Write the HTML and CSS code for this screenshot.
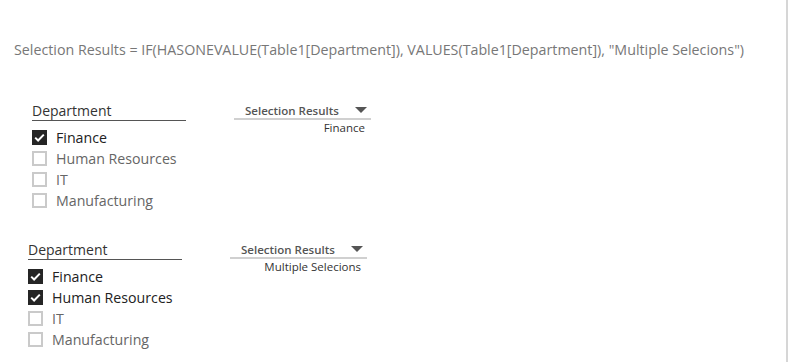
FILE: index.html
```html
<!DOCTYPE html>
<html lang="en">
<head>
    <meta charset="UTF-8">
    <title>Selection Results</title>
    <link rel="stylesheet" href="styles.css">
</head>
<body>
<div class="page">

    <!-- DAX measure -->
    <p class="formula">Selection Results = IF(HASONEVALUE(Table1[Department]), VALUES(Table1[Department]), "Multiple Selecions")</p>

    <!-- One department selected -->
    <div class="demo demo-first">
        <div class="slicer">
            <div class="slicer-title">Department</div>
            <ul class="slicer-list">
                <li class="checked"><span class="box"><svg viewBox="0 0 15 15"><path d="M3.2 7.6 L6.1 10.5 L11.8 4.6" fill="none" stroke="#fff" stroke-width="2"/></svg></span>Finance</li>
                <li><span class="box"></span>Human Resources</li>
                <li><span class="box"></span>IT</li>
                <li><span class="box"></span>Manufacturing</li>
            </ul>
        </div>
        <div class="card">
            <div class="card-head">
                <span>Selection Results</span>
                <span class="arrow"></span>
            </div>
            <div class="card-value">Finance</div>
        </div>
    </div>

    <!-- Two departments selected -->
    <div class="demo demo-second">
        <div class="slicer">
            <div class="slicer-title">Department</div>
            <ul class="slicer-list">
                <li class="checked"><span class="box"><svg viewBox="0 0 15 15"><path d="M3.2 7.6 L6.1 10.5 L11.8 4.6" fill="none" stroke="#fff" stroke-width="2"/></svg></span>Finance</li>
                <li class="checked"><span class="box"><svg viewBox="0 0 15 15"><path d="M3.2 7.6 L6.1 10.5 L11.8 4.6" fill="none" stroke="#fff" stroke-width="2"/></svg></span>Human Resources</li>
                <li><span class="box"></span>IT</li>
                <li><span class="box"></span>Manufacturing</li>
            </ul>
        </div>
        <div class="card">
            <div class="card-head">
                <span>Selection Results</span>
                <span class="arrow"></span>
            </div>
            <div class="card-value">Multiple Selecions</div>
        </div>
    </div>

</div>
</body>
</html>
```

FILE: styles.css
```css
body {
    margin: 0;
    font-family: "Open Sans", "Noto Sans", sans-serif;
    background-color: #fff;
    color: #333;
}
.page {
    box-sizing: border-box;
    width: 788px;
    height: 362px;
    border-right: 2px solid #d6d6d6;
    overflow: hidden;
}
.formula {
    margin: 0;
    padding: 40px 0 0 14px;
    font-size: 14.25px;
    line-height: 20px;
    color: #777;
    white-space: nowrap;
}
.demo {
    display: flex;
    align-items: flex-start;
    gap: 48px;
}
.demo-first {
    margin: 42px 0 0 32px;
}
.demo-second {
    margin: 30px 0 0 28px;
}
.slicer {
    width: 154px;
}
.slicer-title {
    font-size: 14px;
    line-height: 18px;
    color: #333;
    border-bottom: 1px solid #555;
}
.slicer-list {
    list-style: none;
    margin: 6px 0 0;
    padding: 0;
}
.slicer-list li {
    display: flex;
    align-items: center;
    height: 21px;
    font-size: 14.2px;
    color: #666;
    white-space: nowrap;
}
.slicer-list li.checked {
    color: #222;
}
.box {
    box-sizing: border-box;
    width: 15px;
    height: 15px;
    margin-right: 9px;
    border: 2px solid #cacaca;
    background-color: #fff;
    flex-shrink: 0;
}
.box svg {
    display: block;
    width: 15px;
    height: 15px;
    margin: -2px;
}
.checked .box {
    border-color: #252525;
    background-color: #252525;
}
.card {
    width: 137px;
}
.card-head {
    display: flex;
    justify-content: space-between;
    align-items: center;
    height: 16px;
    padding: 0 4px 0 11px;
    font-size: 11.5px;
    font-weight: 600;
    color: #555;
    border-bottom: 2px solid #d0d0d0;
}
.arrow {
    width: 0;
    height: 0;
    border-left: 6.5px solid transparent;
    border-right: 6.5px solid transparent;
    border-top: 6px solid #555;
}
.card-value {
    padding-right: 6px;
    font-size: 11.5px;
    line-height: 16px;
    text-align: right;
    color: #333;
}
```
